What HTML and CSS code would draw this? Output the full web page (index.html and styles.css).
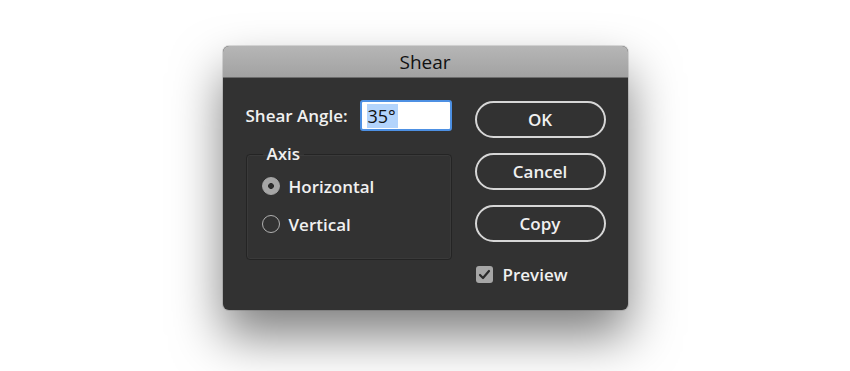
FILE: index.html
```html
<!DOCTYPE html>
<html>
<head>
<meta charset="utf-8">
<link rel="stylesheet" href="styles.css">
</head>
<body>
<div class="dialog">
  <div class="titlebar">Shear</div>
  <div class="content">
    <div class="left">
      <div class="angle-row">
        <span class="label">Shear Angle:</span>
        <div class="input"><span class="sel">35°</span></div>
      </div>
      <fieldset class="axis">
        <legend>Axis</legend>
        <div class="radio-row"><span class="radio checked"></span><span class="label">Horizontal</span></div>
        <div class="radio-row"><span class="radio"></span><span class="label">Vertical</span></div>
      </fieldset>
    </div>
    <div class="right">
      <div class="btn">OK</div>
      <div class="btn">Cancel</div>
      <div class="btn">Copy</div>
      <div class="check-row">
        <span class="checkbox"><svg width="13" height="11" viewBox="0 0 13 11"><path d="M2 6 L5 9 L11 2" fill="none" stroke="#2a2a2a" stroke-width="2.2" stroke-linecap="round" stroke-linejoin="round"/></svg></span>
        <span class="label">Preview</span>
      </div>
    </div>
  </div>
</div>
</body>
</html>
```
FILE: styles.css
```css
html, body {
  margin: 0;
  padding: 0;
  background: #ffffff;
  height: 100%;
  overflow: hidden;
}
body {
  font-family: "Open Sans", "Noto Sans", sans-serif;
}
.dialog {
  width: 405px;
  height: 264px;
  margin: 46px auto 0;
  border-radius: 6px;
  background: #323232;
  box-shadow: 0 26px 50px rgba(0,0,0,0.5), 0 0 0 1px rgba(0,0,0,0.12);
  overflow: hidden;
  display: flex;
  flex-direction: column;
}
.titlebar {
  height: 31px;
  border-bottom: 1px solid #6c6c6c;
  background: linear-gradient(#b6b6b6, #a2a2a2);
  color: #111;
  font-size: 19px;
  text-align: center;
  line-height: 32px;
}
.content {
  flex: 1;
  display: flex;
  padding: 22px 0 0 23px;
}
.left {
  width: 206px;
}
.label {
  color: #f0f0f0;
  font-size: 17px;
  font-weight: 600;
}
.angle-row {
  display: flex;
  align-items: center;
  justify-content: space-between;
  height: 31px;
}
.input {
  height: 27px;
  border: 2px solid #4d90e3;
  border-radius: 3px;
  background: #fff;
  display: flex;
  align-items: center;
  padding-left: 5px;
  box-sizing: content-box;
  width: 83px;
}
.sel {
  background: #b3d4fc;
  color: #111;
  font-size: 18px;
  line-height: 24px;
  padding: 0 2px 0 1px;
}
.axis {
  margin: 14px 0 0;
  padding: 4px 0 0 15px;
  height: 115px;
  box-sizing: border-box;
  border: 1px solid #242424;
  border-radius: 4px;
  box-shadow: inset 0 0 0 1px rgba(255,255,255,0.04);
}
.axis legend {
  color: #f0f0f0;
  font-size: 17px;
  font-weight: 600;
  padding: 0 4px;
  margin-left: 1px;
  line-height: 18px;
}
.radio-row {
  display: flex;
  align-items: center;
  height: 38px;
  gap: 9px;
}
.radio {
  width: 16px;
  height: 16px;
  border-radius: 50%;
  border: 1.5px solid #b0b0b0;
  box-sizing: content-box;
}
.radio.checked {
  border-color: #a6a6a6;
  background: radial-gradient(circle, #2c2c2c 0 2.6px, #a6a6a6 3.2px);
}
.right {
  margin-left: 23px;
  padding-top: 1px;
  width: 131px;
  display: flex;
  flex-direction: column;
}
.btn {
  height: 33px;
  border: 2px solid #d6d6d6;
  border-radius: 20px;
  color: #f0f0f0;
  font-size: 17px;
  font-weight: 600;
  text-align: center;
  line-height: 33px;
  margin-bottom: 15px;
}
.check-row {
  display: flex;
  align-items: center;
  gap: 10px;
  margin-top: 6px;
  padding-left: 1px;
}
.checkbox {
  width: 17px;
  height: 17px;
  border-radius: 3px;
  background: #a6a6a6;
  display: flex;
  align-items: center;
  justify-content: center;
}
```
